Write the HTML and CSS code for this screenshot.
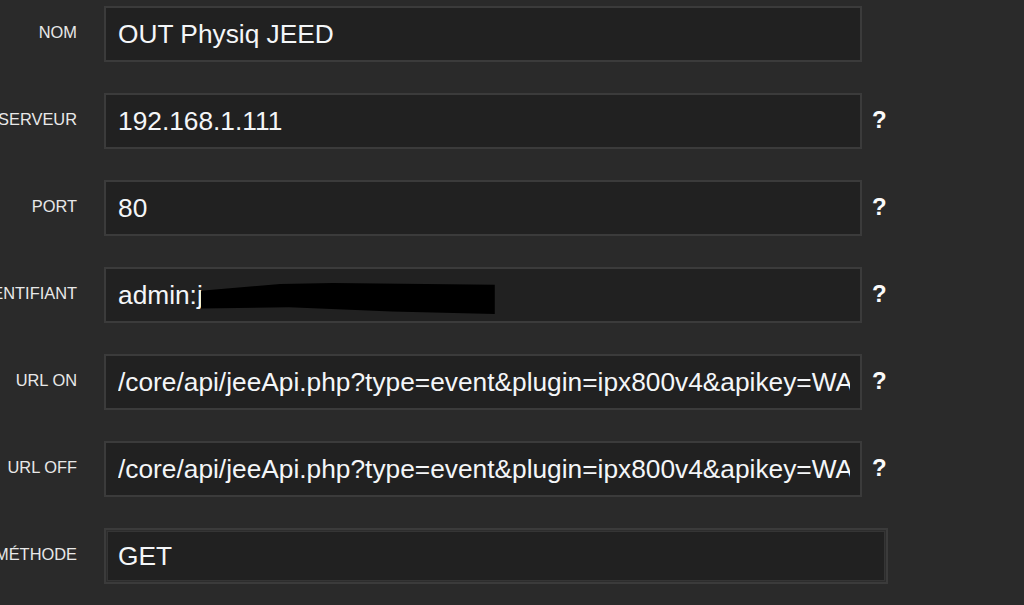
FILE: index.html
```html
<!DOCTYPE html>
<html lang="fr">
<head>
<meta charset="utf-8">
<link rel="stylesheet" href="styles.css">
<title>Équipement</title>
</head>
<body>
<form class="form">
  <div class="row">
    <label class="lbl">Nom</label>
    <div class="field"><span class="val">OUT Physiq JEED</span></div>
  </div>
  <div class="row">
    <label class="lbl">Serveur</label>
    <div class="field"><span class="val">192.168.1.111</span></div>
    <span class="help">?</span>
  </div>
  <div class="row">
    <label class="lbl">Port</label>
    <div class="field"><span class="val">80</span></div>
    <span class="help">?</span>
  </div>
  <div class="row">
    <label class="lbl">Identifiant</label>
    <div class="field"><span class="val">admin:j<span class="redact"></span></span></div>
    <span class="help">?</span>
  </div>
  <div class="row">
    <label class="lbl">URL ON</label>
    <div class="field"><span class="val">/core/api/jeeApi.php?type=event&amp;plugin=ipx800v4&amp;apikey=WA</span></div>
    <span class="help">?</span>
  </div>
  <div class="row">
    <label class="lbl">URL OFF</label>
    <div class="field"><span class="val">/core/api/jeeApi.php?type=event&amp;plugin=ipx800v4&amp;apikey=WA</span></div>
    <span class="help">?</span>
  </div>
  <div class="row">
    <label class="lbl">Méthode</label>
    <div class="field select"><span class="val">GET</span></div>
  </div>
</form>
</body>
</html>
```
FILE: styles.css
```css
html, body {
  margin: 0;
  padding: 0;
  background: #2a2a2a;
  overflow: hidden;
  height: 605px;
}
body {
  font-family: "Liberation Sans", Arial, sans-serif;
  color: #f0f0f0;
}
.form {
  display: flex;
  flex-direction: column;
  gap: 31px;
  padding-top: 6px;
}
.row {
  display: flex;
  align-items: center;
  height: 56px;
}
.lbl {
  width: 77px;
  flex: none;
  display: flex;
  justify-content: flex-end;
  white-space: nowrap;
  text-transform: uppercase;
  font-size: 16.4px;
  color: #e8e8e8;
  margin-right: 27px;
  margin-top: -3px;
}
.field {
  box-sizing: border-box;
  width: 758px;
  height: 56px;
  flex: none;
  background: #212121;
  border: 2px solid #3b3b3b;
  padding: 0 10px 0 12px;
  font-size: 26.3px;
  line-height: 52px;
  color: #f4f6f8;
}
.val {
  display: block;
  white-space: nowrap;
  overflow: hidden;
}
.select {
  width: 784px;
  box-shadow: inset 0 0 0 1px #2d2d2d, inset 0 0 0 2px #353535;
}
.help {
  margin-left: 10px;
  font-size: 24px;
  font-weight: bold;
  color: #fafafa;
  margin-top: -2px;
}
.redact {
  display: inline-block;
  width: 294px;
  height: 31px;
  background: #000;
  vertical-align: -10px;
  margin-left: -2px;
  clip-path: polygon(0 25%, 27% 3%, 45% 0, 100% 6%, 100% 100%, 65% 92%, 30% 78%, 0 82%);
}
```
